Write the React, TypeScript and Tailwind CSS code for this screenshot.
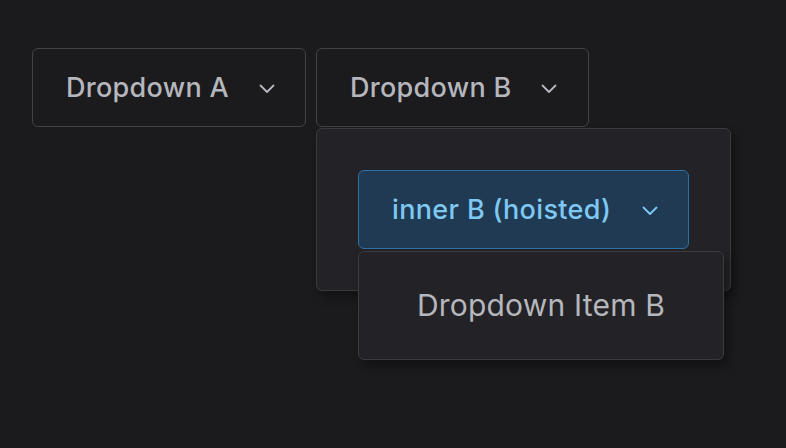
import React from "react";

function Chevron({ className }: { className?: string }) {
  return (
    <svg width="16" height="10" viewBox="0 0 16 10" fill="none" className={className}>
      <polyline points="1.5,1.5 8,8 14.5,1.5" stroke="currentColor" strokeWidth="1.8" strokeLinecap="round" strokeLinejoin="round" />
    </svg>
  );
}

export default function App() {
  return (
    <div
      className="w-[786px] h-[448px] bg-[#1b1b1e] pl-[32px] pt-[48px]"
      style={{ fontFamily: "Inter, 'Noto Sans', sans-serif" }}
    >
      <div className="flex gap-[10px] items-start">
        <button className="w-[274px] h-[79px] flex items-center justify-between pl-[33px] pr-[30px] pt-[2px] border border-[#424248] rounded-[6px] text-[#b6b6bd] text-[27px] tracking-[0.3px] font-medium">
          <span>Dropdown A</span>
          <Chevron />
        </button>
        <div className="relative">
          <button className="w-[273px] h-[79px] flex items-center justify-between pl-[33px] pr-[31px] pt-[2px] border border-[#424248] rounded-[6px] text-[#b6b6bd] text-[27px] tracking-[0.3px] font-medium">
            <span>Dropdown B</span>
            <Chevron />
          </button>
          <div className="absolute left-0 top-[80px] w-[415px] h-[163px] p-[41px] bg-[#232327] border border-[#3a3a3f] rounded-[6px] shadow-[4px_6px_10px_rgba(0,0,0,0.35)]">
            <div className="relative">
              <button className="w-[331px] h-[79px] flex items-center justify-between pl-[33px] pr-[30px] pt-[2px] bg-[#1f3a52] border border-[#2f70a6] rounded-[6px] text-[#7ec8f2] text-[27px] tracking-[0.35px] font-medium">
                <span>inner B (hoisted)</span>
                <Chevron />
              </button>
              <div className="absolute left-0 top-[81px] w-[366px] h-[109px] flex items-center justify-center bg-[#232327] border border-[#3a3a3f] rounded-[6px] text-[#b6b6bd] text-[30px] tracking-[0.2px] shadow-[4px_6px_10px_rgba(0,0,0,0.35)]">
                Dropdown Item B
              </div>
            </div>
          </div>
        </div>
      </div>
    </div>
  );
}
